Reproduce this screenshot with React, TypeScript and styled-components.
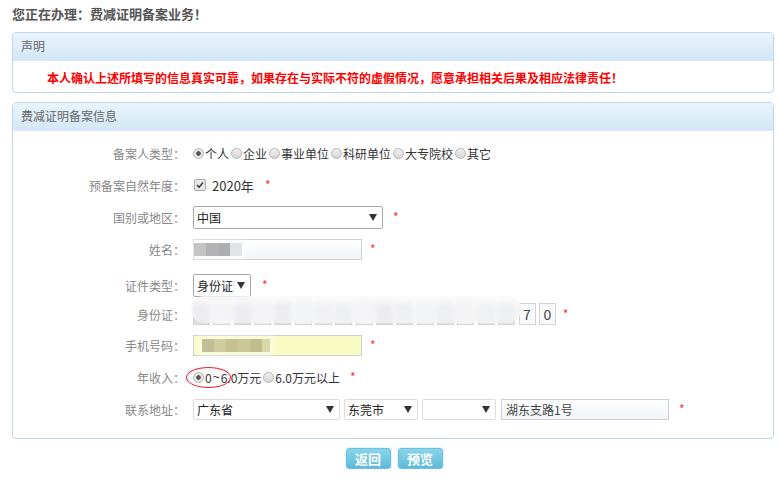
import styled, { createGlobalStyle } from "styled-components";

const GlobalStyle = createGlobalStyle`
  body {
    margin: 0;
    background: #fff;
    font-family: "Noto Sans CJK SC", "Noto Sans", sans-serif;
    font-size: 12px;
    color: #333;
  }
`;

const Page = styled.div`
  padding: 0 6px 0 12px;
  width: 762px;
`;

const Title = styled.div`
  height: 28px;
  line-height: 28px;
  margin-bottom: 4px;
  font-size: 13px;
  font-weight: bold;
  color: #555;
`;

const Panel = styled.div<{ $mt?: number }>`
  border: 1px solid #c2d5e6;
  border-radius: 4px;
  margin-top: ${(p) => p.$mt ?? 0}px;
  overflow: hidden;
`;

const PanelHead = styled.div`
  height: 27px;
  line-height: 26px;
  padding-left: 8px;
  color: #666;
  font-size: 12px;
  background: linear-gradient(#e9f4fc, #d3e7f6);
  border-bottom: 1px solid #dbe8f3;
`;

const Notice = styled.div`
  padding: 8px 0 5px 34px;
  line-height: 18px;
  color: #f00;
  font-weight: bold;
  font-size: 12px;
`;

const FormBody = styled.div`
  padding: 6px 0 13px;
`;

const Row = styled.div<{ $h?: number; $mt?: number }>`
  display: grid;
  grid-template-columns: 172px 1fr;
  column-gap: 8px;
  align-items: center;
  height: ${(p) => p.$h ?? 32}px;
  margin-top: ${(p) => p.$mt ?? 0}px;
`;

const Label = styled.div`
  text-align: right;
  color: #888;
  font-size: 12px;
`;

const Field = styled.div`
  display: flex;
  align-items: center;
  position: relative;
  font-size: 12px;
  color: #333;
`;

const Star = styled.span<{ $ml: number }>`
  color: #f33;
  font-size: 12px;
  margin-left: ${(p) => p.$ml}px;
  line-height: 12px;
`;

const RadioDot = styled.span<{ $on?: boolean }>`
  display: inline-block;
  width: 9px;
  height: 9px;
  border-radius: 50%;
  border: 1px solid #b4b4b4;
  background: ${(p) =>
    p.$on
      ? "radial-gradient(circle, #555 0 2px, #e6e6e6 2.5px)"
      : "linear-gradient(#f0f0f0, #d6d6d6)"};
  margin: 0 1px 0 0;
`;

const Option = styled.span`
  display: inline-flex;
  align-items: center;
  white-space: nowrap;
  margin-right: 2px;
`;

const Tilde = styled.span`
  margin: 0 1px;
  font-family: "Liberation Sans", sans-serif;
`;

const Check = styled.span`
  display: inline-flex;
  width: 10px;
  height: 10px;
  border: 1px solid #aaa;
  border-radius: 2px;
  background: #e8e8e8;
  align-items: center;
  justify-content: center;
  margin: 0 6px 0 1px;
`;

const Year = styled.span`
  font-size: 13px;
`;

const Select = styled.div<{ $w: number; $h: number; $light?: boolean; $ml?: number }>`
  box-sizing: border-box;
  width: ${(p) => p.$w}px;
  height: ${(p) => p.$h}px;
  margin-left: ${(p) => p.$ml ?? 0}px;
  border: 1px solid ${(p) => (p.$light ? "#dcdcdc" : "#a9a9a9")};
  border-radius: 2px;
  background: #fff;
  display: flex;
  align-items: center;
  padding: 0 5px 0 3px;
  font-size: 12px;
  color: #222;
  white-space: nowrap;
  &::after {
    content: "";
    margin-left: auto;
    flex-shrink: 0;
    border-left: 4px solid transparent;
    border-right: 4px solid transparent;
    border-top: 7px solid #333;
  }
`;

const TextBox = styled.div<{ $w: number; $yellow?: boolean; $ml?: number }>`
  box-sizing: border-box;
  width: ${(p) => p.$w}px;
  height: 21px;
  margin-left: ${(p) => p.$ml ?? 0}px;
  border: 1px solid #cfcfcf;
  background: ${(p) => (p.$yellow ? "#f8fcc2" : "linear-gradient(#fff, #f1f5f9)")};
  display: flex;
  align-items: center;
  padding-left: 4px;
  font-size: 12px;
  color: #444;
  position: relative;
`;

const Smudge = styled.div<{ $w: number; $c: string }>`
  width: ${(p) => p.$w}px;
  height: 13px;
  background: ${(p) => p.$c};
`;

const SmudgeRow = styled.div<{ $left: number }>`
  position: absolute;
  left: ${(p) => p.$left}px;
  top: 3px;
  display: flex;
  filter: blur(0.6px);
  box-shadow: 0 0 6px 4px rgba(255, 255, 255, 0.5);
`;

const IdBoxes = styled.div`
  display: flex;
  gap: 3.35px;
  position: relative;
`;

const IdBox = styled.div<{ $c: string }>`
  box-sizing: border-box;
  width: 17px;
  height: 22px;
  border: 1px solid #d3d3d3;
  background: ${(p) => p.$c};
  display: flex;
  align-items: center;
  justify-content: center;
  font-size: 14px;
  color: #444;
`;

const IdHaze = styled.div`
  position: absolute;
  left: -2px;
  top: -7px;
  width: 330px;
  height: 27px;
  border-radius: 14px;
  background: rgba(246, 247, 249, 0.6);
  backdrop-filter: blur(2.5px);
  pointer-events: none;
`;

const Ring = styled.div`
  position: absolute;
  left: -7px;
  top: calc(50% - 10px);
  width: 43px;
  height: 19px;
  border: 1px solid #e23;
  border-radius: 50%;
  pointer-events: none;
`;

const Buttons = styled.div`
  display: flex;
  justify-content: center;
  gap: 7px;
  margin-top: 9px;
  padding-left: 2px;
`;

const Button = styled.button`
  width: 45px;
  height: 21px;
  border: 1px solid #6cc1dc;
  border-radius: 3px;
  background: linear-gradient(#8ad5ea, #5dbad7);
  color: #fff;
  font-family: "Noto Sans CJK SC", sans-serif;
  font-size: 13px;
  font-weight: bold;
  padding: 0;
  line-height: 19px;
  box-shadow: 0 0 0 1px #e4f4fa;
`;

const kinds = ["个人", "企业", "事业单位", "科研单位", "大专院校", "其它"];

const idShades = [
  "#dedfe1", "#f1f2f4", "#dcdde0", "#ecedef", "#dedfe2", "#eff1f3",
  "#e8e9ec", "#e3e5e8", "#f2f3f5", "#dbdcdf", "#e4e6e8", "#eceef0",
  "#e1e3e6", "#f0f1f3", "#e6e8ea", "#e2e4e6",
];

function App() {
  return (
    <Page>
      <GlobalStyle />
      <Title>您正在办理：费减证明备案业务！</Title>
      <Panel>
        <PanelHead>声明</PanelHead>
        <Notice>
          本人确认上述所填写的信息真实可靠，如果存在与实际不符的虚假情况，愿意承担相关后果及相应法律责任！
        </Notice>
      </Panel>

      <Panel $mt={9}>
        <PanelHead>费减证明备案信息</PanelHead>
        <FormBody>
          <Row>
            <Label>备案人类型：</Label>
            <Field>
              {kinds.map((k, i) => (
                <Option key={k}>
                  <RadioDot $on={i === 0} />
                  {k}
                </Option>
              ))}
            </Field>
          </Row>
          <Row>
            <Label>预备案自然年度：</Label>
            <Field>
              <Check>
                <svg width="8" height="8" viewBox="0 0 8 8">
                  <path d="M1 4 L3.2 6.3 L7 1.5" stroke="#333" strokeWidth="1.4" fill="none" />
                </svg>
              </Check>
              <Year>2020年</Year>
              <Star $ml={11}>*</Star>
            </Field>
          </Row>
          <Row>
            <Label>国别或地区：</Label>
            <Field>
              <Select $w={190} $h={23}>中国</Select>
              <Star $ml={10}>*</Star>
            </Field>
          </Row>
          <Row>
            <Label>姓名：</Label>
            <Field>
              <TextBox $w={169}>
                <SmudgeRow $left={0}>
                  <Smudge $w={12} $c="#c4c4c4" />
                  <Smudge $w={12} $c="#b3b3b5" />
                  <Smudge $w={12} $c="#adaeb0" />
                  <Smudge $w={12} $c="#e1e3e7" />
                </SmudgeRow>
              </TextBox>
              <Star $ml={8}>*</Star>
            </Field>
          </Row>
          <Row $mt={4}>
            <Label>证件类型：</Label>
            <Field>
              <Select $w={58} $h={23}>身份证</Select>
              <Star $ml={11}>*</Star>
            </Field>
          </Row>
          <Row $h={26}>
            <Label>身份证：</Label>
            <Field>
              <IdBoxes>
                {idShades.map((c, i) => (
                  <IdBox key={i} $c={c} />
                ))}
                <IdBox $c="#f7f9fb">7</IdBox>
                <IdBox $c="#f7f9fb">0</IdBox>
                <IdHaze />
              </IdBoxes>
              <Star $ml={7}>*</Star>
            </Field>
          </Row>
          <Row $mt={2}>
            <Label>手机号码：</Label>
            <Field>
              <TextBox $w={169} $yellow>
                <SmudgeRow $left={8}>
                  <Smudge $w={12} $c="#c2bf96" />
                  <Smudge $w={12} $c="#cfcda0" />
                  <Smudge $w={12} $c="#c5c290" />
                  <Smudge $w={12} $c="#c9c796" />
                  <Smudge $w={12} $c="#c0bd8c" />
                  <Smudge $w={8} $c="#d9d8a8" />
                </SmudgeRow>
              </TextBox>
              <Star $ml={8}>*</Star>
            </Field>
          </Row>
          <Row>
            <Label>年收入：</Label>
            <Field>
              <Option>
                <RadioDot $on />
                0<Tilde>~</Tilde>6.0万元
              </Option>
              <Option>
                <RadioDot />
                6.0万元以上
              </Option>
              <Star $ml={8}>*</Star>
              <Ring />
            </Field>
          </Row>
          <Row>
            <Label>联系地址：</Label>
            <Field>
              <Select $w={147} $h={21} $light>广东省</Select>
              <Select $w={74} $h={21} $light $ml={4}>东莞市</Select>
              <Select $w={74} $h={21} $light $ml={4}></Select>
              <TextBox $w={168} $ml={5}>湖东支路1号</TextBox>
              <Star $ml={10}>*</Star>
            </Field>
          </Row>
        </FormBody>
      </Panel>

      <Buttons>
        <Button>返回</Button>
        <Button>预览</Button>
      </Buttons>
    </Page>
  );
}

export default App;
